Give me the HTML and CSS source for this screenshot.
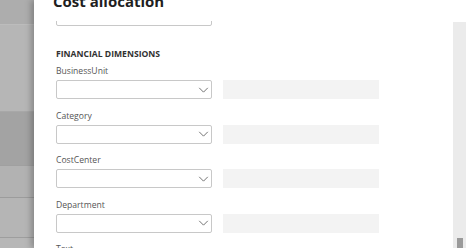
FILE: index.html
```html
<!DOCTYPE html>
<html>
<head>
<meta charset="utf-8">
<link rel="stylesheet" href="styles.css">
</head>
<body>
<div class="screen">
  <div class="backdrop">
    <div class="band b1"></div>
    <div class="band b2"></div>
    <div class="band b3"></div>
    <div class="band b4"></div>
    <div class="band b5"></div>
    <div class="band b6"></div>
  </div>
  <div class="panel">
    <div class="header"><h1 class="title">Cost allocation</h1></div>
    <div class="scroll">
      <div class="content">
        <div class="box partial"></div>
        <div class="section">FINANCIAL DIMENSIONS</div>
        <div class="field">
          <div class="label">BusinessUnit</div>
          <div class="row">
            <div class="select"><svg class="chev" viewBox="0 0 12 7"><path d="M1 1 L6 6 L11 1" /></svg></div>
            <div class="readonly"></div>
          </div>
        </div>
        <div class="field">
          <div class="label">Category</div>
          <div class="row">
            <div class="select"><svg class="chev" viewBox="0 0 12 7"><path d="M1 1 L6 6 L11 1" /></svg></div>
            <div class="readonly"></div>
          </div>
        </div>
        <div class="field">
          <div class="label">CostCenter</div>
          <div class="row">
            <div class="select"><svg class="chev" viewBox="0 0 12 7"><path d="M1 1 L6 6 L11 1" /></svg></div>
            <div class="readonly"></div>
          </div>
        </div>
        <div class="field">
          <div class="label">Department</div>
          <div class="row">
            <div class="select"><svg class="chev" viewBox="0 0 12 7"><path d="M1 1 L6 6 L11 1" /></svg></div>
            <div class="readonly"></div>
          </div>
        </div>
        <div class="field">
          <div class="label">Text</div>
        </div>
      </div>
      <div class="scrollbar"><div class="thumb"></div></div>
    </div>
  </div>
</div>
</body>
</html>
```
FILE: styles.css
```css
html, body {
  margin: 0;
  padding: 0;
}
body {
  width: 474px;
  height: 248px;
  overflow: hidden;
  font-family: "Open Sans", "Noto Sans", sans-serif;
}
.screen {
  display: flex;
  width: 474px;
  height: 248px;
  overflow: hidden;
}
.backdrop {
  width: 34px;
  flex: none;
  display: flex;
  flex-direction: column;
  background: #b3b3b3;
}
.band {
  flex: none;
  border-bottom: 1px solid #a4a4a4;
}
.b1 { height: 24px; background: #adadad; border-bottom-color: #bcbcbc; }
.b2 { height: 86px; background: #b6b6b6; border-bottom-color: #a8a8a8; }
.b3 { height: 53px; background: #a3a3a3; border-bottom-color: #a0a0a0; }
.b4 { height: 31px; background: #b2b2b2; border-bottom-color: #9c9c9c; }
.b5 { height: 39px; background: #b5b5b5; border-bottom-color: #9e9e9e; }
.b6 { flex: 1; background: #b7b7b7; border-bottom: none; }

.panel {
  flex: 1;
  display: flex;
  flex-direction: column;
  background: #ffffff;
  box-shadow: -3px 0 6px rgba(0, 0, 0, 0.25);
  position: relative;
  min-width: 0;
}
.header {
  height: 21px;
  flex: none;
  padding-left: 19px;
  background: #ffffff;
  position: relative;
  z-index: 1;
}
.title {
  margin: -9px 0 0 0;
  font-size: 15px;
  line-height: 20px;
  font-weight: 700;
  color: #1f1f1f;
}
.scroll {
  flex: 1;
  display: flex;
  min-height: 0;
}
.content {
  flex: 1;
  padding-left: 22px;
  min-width: 0;
}
.box {
  width: 154px;
  height: 18px;
  border: 1px solid #c8c8c8;
  border-radius: 2px;
}
.partial {
  margin-top: -15px;
}
.section {
  margin-top: 22px;
  font-size: 8.6px;
  line-height: 12px;
  font-weight: 700;
  color: #323232;
}
.field {
  margin-top: 5px;
}
.field + .field {
  margin-top: 10.5px;
}
.label {
  font-size: 8.6px;
  line-height: 13px;
  color: #555555;
  margin-bottom: 2px;
}
.row {
  display: flex;
  gap: 11px;
}
.select {
  width: 152px;
  height: 17px;
  border: 1px solid #c8c8c8;
  border-radius: 2px;
  display: flex;
  align-items: center;
  justify-content: flex-end;
  padding-right: 2px;
  box-sizing: content-box;
}
.chev {
  width: 11px;
  height: 6px;
}
.chev path {
  fill: none;
  stroke: #6a6a6a;
  stroke-width: 1.1;
}
.readonly {
  width: 156px;
  height: 19px;
  background: #f3f3f3;
}
.scrollbar {
  width: 13px;
  flex: none;
  margin-top: 1px;
  margin-right: 8px;
  background: #ebebeb;
  display: flex;
  flex-direction: column;
  justify-content: flex-end;
  align-items: center;
}
.thumb {
  width: 6px;
  height: 10px;
  background: #9a9a9a;
}
```
